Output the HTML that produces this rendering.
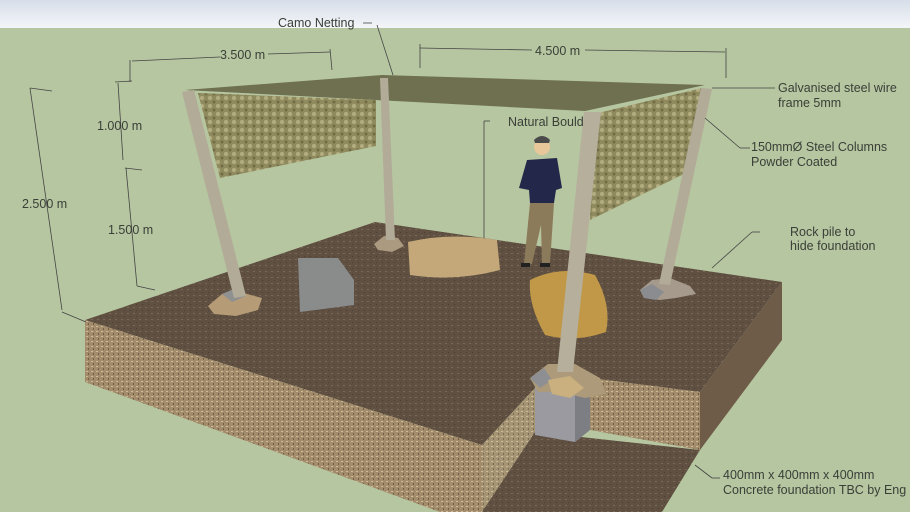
<!DOCTYPE html>
<html><head><meta charset="utf-8"><style>
html,body{margin:0;padding:0;width:910px;height:512px;overflow:hidden;background:#b6c6a0}
svg{display:block}
text{font-family:"Liberation Sans",sans-serif;font-size:12.5px;fill:#3a3f38}
</style></head><body>
<svg width="910" height="512" viewBox="0 0 910 512" xmlns="http://www.w3.org/2000/svg">
<defs>
<linearGradient id="sky" x1="0" y1="0" x2="0" y2="1"><stop offset="0" stop-color="#d7dee9"/><stop offset="1" stop-color="#f3f5f8"/></linearGradient>
<pattern id="grav" width="6" height="6" patternUnits="userSpaceOnUse"><rect width="6" height="6" fill="#5f5042"/><rect x="1" y="1" width="2" height="1" fill="#7a6856"/><rect x="4" y="4" width="1" height="1" fill="#4a3d32"/></pattern>
<pattern id="face" width="5" height="5" patternUnits="userSpaceOnUse"><rect width="5" height="5" fill="#a28c6c"/><rect x="1" y="1" width="2" height="1" fill="#cdb993"/><rect x="3" y="3" width="1" height="2" fill="#715e46"/></pattern>
<pattern id="net" width="8" height="8" patternUnits="userSpaceOnUse"><rect width="8" height="8" fill="#8f8b5e"/><circle cx="2" cy="2" r="2" fill="#b3ad80"/><circle cx="6" cy="6" r="1.5" fill="#726c45"/></pattern>
</defs>
<rect width="910" height="28" fill="url(#sky)"/>
<rect y="28" width="910" height="484" fill="#b6c6a0"/>
<polygon points="85,320 375,222 782,282 700,392 590,378 535,388 482,445" fill="url(#grav)"/>
<polygon points="85,320 482,445 482,512 440,512 85,382" fill="url(#face)"/>
<polygon points="482,445 535,388 535,432 482,512" fill="url(#face)" opacity="0.85"/>
<polygon points="590,378 700,392 700,450 590,430" fill="url(#face)"/>
<polygon points="700,392 782,282 782,340 700,450" fill="#6e5c48"/>
<polygon points="482,512 535,432 700,450 662,512" fill="url(#grav)"/>
<polygon points="535,385 575,395 590,385 590,430 575,442 535,435" fill="#9a9aa0"/>
<polygon points="575,395 590,385 590,430 575,442" fill="#7d7d84"/>
<polygon points="298,258 338,258 354,280 354,305 300,312" fill="#8a8c8c"/>
<path d="M408,242 Q450,232 497,240 L500,270 Q455,282 410,275 Z" fill="#c4a87a"/>
<path d="M530,280 Q560,265 595,275 Q612,305 606,332 Q575,343 545,335 Q528,305 530,280Z" fill="#c19848"/>
<!-- rock piles -->
<g>
<polygon points="208,306 222,294 240,292 262,298 258,310 236,316 214,314" fill="#b59b76"/>
<polygon points="222,294 236,288 246,296 232,302" fill="#8f9090"/>
<polygon points="374,244 384,236 398,238 404,246 392,252 378,250" fill="#ab9a80"/>
<polygon points="640,290 652,280 670,278 690,286 696,294 676,298 660,300 644,298" fill="#a59a8c"/>
<polygon points="640,290 652,284 664,292 656,300 644,298" fill="#8a8c90"/>
<polygon points="530,378 548,364 575,364 600,378 606,394 585,398 560,392 538,392" fill="#ad9a7a"/>
<polygon points="530,378 544,368 552,380 540,388" fill="#8d8f92"/>
<polygon points="548,380 570,376 584,388 570,398 552,394" fill="#c9b07e"/>
</g>
<polygon points="185,90 382,75 705,85 585,111" fill="#6e7050"/>
<polygon points="198,93 376,100 376,146 220,178" fill="url(#net)"/>
<polygon points="594,114 702,88 688,172 590,220" fill="url(#net)"/>
<polygon points="182,92 194,90 246,296 234,298" fill="#b2ab98"/>
<polygon points="380,78 388,78 395,240 386,240" fill="#b2ab98"/>
<polygon points="701,88 712,89 670,285 659,284" fill="#b2ab98"/>
<polygon points="584,112 601,112 573,372 557,372" fill="#b6af9c"/>
<circle cx="542" cy="147" r="8" fill="#e8c89a"/>
<path d="M534,140 Q542,132 550,140 L549,143 L535,143Z" fill="#4a4a4a"/>
<path d="M527,160 L557,158 L562,188 L556,190 L554,203 L530,203 L529,190 L519,188Z" fill="#23284a"/>
<path d="M530,203 L554,203 L550,264 L542,264 L541,225 L532,264 L524,264Z" fill="#8c7b5a"/>
<rect x="521" y="263" width="9" height="4" fill="#222"/><rect x="540" y="263" width="10" height="4" fill="#222"/>
<g stroke="#444" stroke-width="0.8" fill="none">
<line x1="132" y1="61" x2="220" y2="57"/><line x1="268" y1="54" x2="330" y2="52"/>
<line x1="130" y1="60" x2="130" y2="82"/><line x1="330" y1="49" x2="332" y2="70"/>
<line x1="420" y1="48" x2="532" y2="50"/><line x1="585" y1="50" x2="725" y2="52"/>
<line x1="420" y1="44" x2="420" y2="68"/><line x1="726" y1="48" x2="726" y2="78"/>
<line x1="30" y1="88" x2="62" y2="310"/><line x1="30" y1="88" x2="52" y2="91"/><line x1="62" y1="312" x2="86" y2="322"/>
<line x1="118" y1="83" x2="123" y2="160"/><line x1="115" y1="82" x2="132" y2="81"/>
<line x1="126" y1="168" x2="137" y2="286"/><line x1="125" y1="168" x2="142" y2="170"/><line x1="137" y1="286" x2="155" y2="290"/>
<line x1="363" y1="23" x2="372" y2="23"/><line x1="377" y1="25" x2="393" y2="75"/>
<line x1="490" y1="121" x2="484" y2="121"/><line x1="484" y1="121" x2="484" y2="238"/>
<line x1="712" y1="88" x2="775" y2="88"/>
<line x1="750" y1="148" x2="740" y2="148"/><line x1="740" y1="148" x2="705" y2="118"/>
<line x1="760" y1="232" x2="752" y2="232"/><line x1="752" y1="232" x2="712" y2="268"/>
<line x1="720" y1="478" x2="712" y2="478"/><line x1="712" y1="478" x2="695" y2="465"/>
</g>
<text x="278" y="27">Camo Netting</text>
<text x="220" y="59">3.500 m</text>
<text x="535" y="55">4.500 m</text>
<text x="97" y="130">1.000 m</text>
<text x="22" y="208">2.500 m</text>
<text x="108" y="234">1.500 m</text>
<text x="508" y="126">Natural Bould</text>
<text x="778" y="92">Galvanised steel wire</text>
<text x="778" y="107">frame 5mm</text>
<text x="751" y="151">150mmØ Steel Columns</text>
<text x="751" y="166">Powder Coated</text>
<text x="790" y="236">Rock pile to</text>
<text x="790" y="250">hide foundation</text>
<text x="723" y="479">400mm x 400mm x 400mm</text>
<text x="723" y="494">Concrete foundation TBC by Eng</text>
</svg>
</body></html>
